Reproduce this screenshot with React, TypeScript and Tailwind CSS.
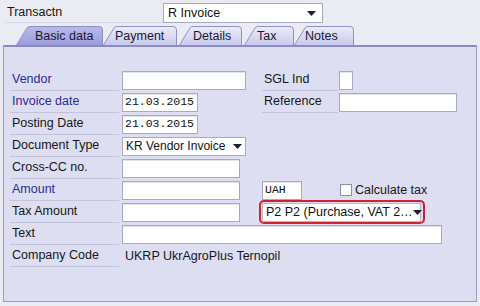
import React from "react";

const FONT = "font-['Liberation_Sans',Arial,sans-serif]";
const MONO = "font-['Liberation_Mono','Courier_New',monospace] text-[11.5px]";

function Arrow() {
  return (
    <svg width="9" height="5" viewBox="0 0 9 5" className="shrink-0">
      <path d="M0 0 H9 L4.5 5 Z" fill="#1c1c30" />
    </svg>
  );
}

function Tab({ label, width, active, textPad }: { label: string; width: number; active?: boolean; textPad: string }) {
  const h = 19;
  const id = active ? "tabA" : "tabI";
  return (
    <div className="relative h-[19px] shrink-0" style={{ width }}>
      <svg width={width} height={h} className="absolute inset-0">
        <defs>
          <linearGradient id={id} x1="0" y1="0" x2="0" y2="1">
            <stop offset="0" stopColor={active ? "#b9b9ec" : "#ececfa"} />
            <stop offset="1" stopColor={active ? "#9d9dde" : "#c9c9ec"} />
          </linearGradient>
        </defs>
        <path
          d={`M0.5 ${h} L11 2 Q12 0.5 14 0.5 L${width - 4} 0.5 Q${width - 0.5} 0.5 ${width - 0.5} 4 L${width - 0.5} ${h}`}
          fill={`url(#${id})`}
          stroke="#8f8fc4"
          strokeWidth="1"
        />
      </svg>
      <span className={`relative block pt-[2px] text-[12.5px] leading-[16px] text-[#1a1a2e] ${textPad}`}>{label}</span>
    </div>
  );
}

function Label({ text, blue, w = "w-[109px]" }: { text: string; blue?: boolean; w?: string }) {
  return (
    <div
      className={`${w} h-[21px] shrink-0 flex items-center pl-[2px] border-b border-[#c3c3d9] text-[12.5px] ${
        blue ? "text-[#2a2a9c]" : "text-[#161616]"
      }`}
    >
      {text}
    </div>
  );
}

function Input({ w, value, mono }: { w: string; value?: string; mono?: boolean }) {
  return (
    <div
      className={`${w} h-[19px] shrink-0 bg-white border border-[#a9a9bf] shadow-[inset_0_1px_0_#e4e4ea] flex items-center px-[2px] text-[#111] whitespace-nowrap overflow-hidden ${
        mono ? MONO : "text-[12.5px]"
      }`}
    >
      {value}
    </div>
  );
}

function Row({ children, right }: { children: React.ReactNode; right?: React.ReactNode }) {
  return (
    <div className="h-[22px] flex items-center">
      <div className="w-[252px] shrink-0 flex items-center gap-[3px]">{children}</div>
      {right && <div className="flex items-center">{right}</div>}
    </div>
  );
}

export default function App() {
  return (
    <div className={`w-[480px] h-[306px] bg-[#ebebf4] overflow-hidden ${FONT}`}>
      <div className="h-[26px] flex items-center pl-[5px]">
        <div className="w-[158px] h-[20px] flex items-center pl-[2px] text-[12.5px] text-[#161616] border-b border-[#d6d6e6]">
          Transactn
        </div>
        <div className="w-[160px] h-[20px] bg-white border border-[#a9a9bf] flex items-center justify-between pl-[4px] pr-[6px] text-[12.5px] text-[#111]">
          <span>R Invoice</span>
          <Arrow />
        </div>
      </div>

      <div className="flex items-end h-[19px] pl-[16px]">
        <Tab label="Basic data" width={87} active textPad="pl-[19px]" />
        <Tab label="Payment" width={74} textPad="pl-[12px]" />
        <div className="w-[2px]" />
        <Tab label="Details" width={63} textPad="pl-[14px]" />
        <div className="w-[2px]" />
        <Tab label="Tax" width={50} textPad="pl-[13px]" />
        <Tab label="Notes" width={60} textPad="pl-[11px]" />
      </div>

      <div className="mx-[3px] w-[474px] h-[257px] bg-[#dedef2] border border-[#9c9cc9] border-t-2 border-t-[#8a8ac6] pl-[6px] pt-[22px]">
        <Row
          right={
            <>
              <Label text="SGL Ind" w="w-[76px]" />
              <div className="ml-[1px]">
                <Input w="w-[14px]" />
              </div>
            </>
          }
        >
          <Label text="Vendor" blue />
          <Input w="w-[124px]" />
        </Row>
        <Row
          right={
            <>
              <Label text="Reference" w="w-[76px]" />
              <div className="ml-[1px]">
                <Input w="w-[118px]" />
              </div>
            </>
          }
        >
          <Label text="Invoice date" blue />
          <Input w="w-[76px]" value="21.03.2015" mono />
        </Row>
        <Row>
          <Label text="Posting Date" />
          <Input w="w-[76px]" value="21.03.2015" mono />
        </Row>
        <Row>
          <Label text="Document Type" />
          <div className="w-[124px] h-[19px] shrink-0 bg-white border border-[#a9a9bf] flex items-center justify-between pl-[3px] pr-[3px] text-[12px] text-[#111]">
            <span className="whitespace-nowrap overflow-hidden">KR Vendor Invoice</span>
            <Arrow />
          </div>
        </Row>
        <Row>
          <Label text="Cross-CC no." />
          <Input w="w-[118px]" />
        </Row>
        <Row
          right={
            <>
              <Input w="w-[40px]" value="UAH" mono />
              <div className="ml-[38px] w-[12px] h-[12px] bg-white border border-[#8f8fa8]" />
              <span className="ml-[3px] text-[12.5px] text-[#161616]">Calculate tax</span>
            </>
          }
        >
          <Label text="Amount" blue />
          <Input w="w-[118px]" />
        </Row>
        <Row
          right={
            <div className="-ml-[3px] w-[166px] h-[24px] rounded-[5px] border-2 border-[#d1222e] flex items-center pl-[1px]">
              <div className="w-[159px] h-[19px] bg-white border border-[#b9b9cc] flex items-center justify-between pl-[3px] pr-[3px] text-[12.5px] text-[#111]">
                <span className="whitespace-nowrap">P2 P2 (Purchase, VAT 2…</span>
                <Arrow />
              </div>
            </div>
          }
        >
          <Label text="Tax Amount" />
          <Input w="w-[118px]" />
        </Row>
        <div className="h-[22px] flex items-center gap-[3px]">
          <Label text="Text" />
          <Input w="w-[320px]" />
        </div>
        <div className="h-[22px] flex items-center gap-[3px]">
          <Label text="Company Code" />
          <span className="pl-[3px] text-[12.5px] text-[#161616]">UKRP UkrAgroPlus Ternopil</span>
        </div>
      </div>
    </div>
  );
}
